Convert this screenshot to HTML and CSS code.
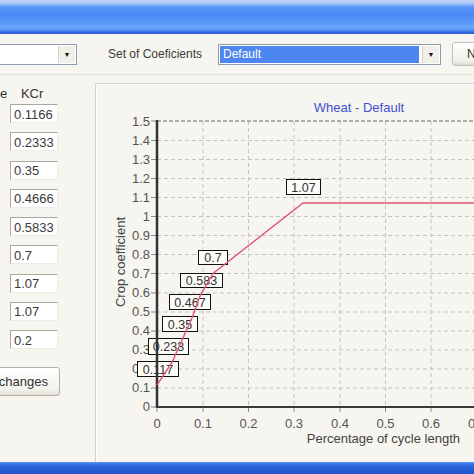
FILE: index.html
```html
<!DOCTYPE html>
<html lang="en">
<head>
  <meta charset="UTF-8" />
  <title>Crop coefficients</title>
  <link rel="stylesheet" href="styles.css">
</head>
<body>

  <!-- Window title bar -->
  <div class="titlebar"></div>

  <!-- Toolbar -->
  <div class="toolbar">
    <div class="combo combo-crop">
      <span class="combo-text"></span>
      <span class="combo-btn">&#9660;</span>
    </div>
    <label class="tool-label">Set of Coeficients</label>
    <div class="combo combo-set">
      <span class="combo-text selected">Default</span>
      <span class="combo-btn">&#9660;</span>
    </div>
    <button class="btn-new">New</button>
  </div>

  <div class="main">

    <!-- KC values -->
    <aside class="side">
      <div class="side-head">
        <span class="col-a">KCe</span>
        <span class="col-b">KCr</span>
      </div>
      <div class="kc-list">
        <input class="kc" type="text" value="0.1166" />
        <input class="kc" type="text" value="0.2333" />
        <input class="kc" type="text" value="0.35" />
        <input class="kc" type="text" value="0.4666" />
        <input class="kc" type="text" value="0.5833" />
        <input class="kc" type="text" value="0.7" />
        <input class="kc" type="text" value="1.07" />
        <input class="kc" type="text" value="1.07" />
        <input class="kc" type="text" value="0.2" />
      </div>
      <button class="btn-save">Save changes</button>
    </aside>

    <!-- Chart -->
    <section class="panel">
      <svg class="chart" width="378" height="378" viewBox="96 84 378 378">
        <text class="title" x="359" y="112" text-anchor="middle">Wheat - Default</text>

        <!-- grid -->
        <path class="grid" d="M157 388H474M157 369H474M157 350H474M157 331H474M157 312H474M157 293H474M157 273.5H474M157 254.5H474M157 235.5H474M157 216.5H474M157 197.5H474M157 178.5H474M157 159.5H474M157 140.5H474" />
        <path class="grid" d="M203 121V407M248.5 121V407M294 121V407M340 121V407M385.5 121V407M431 121V407" />
        <path class="grid-top" d="M157 121H474" />

        <!-- ticks -->
        <path class="tick" d="M151 121H157M151 140.5H157M151 159.5H157M151 178.5H157M151 197.5H157M151 216.5H157M151 235.5H157M151 254.5H157M151 273.5H157M151 293H157M151 312H157M151 331H157M151 350H157M151 369H157M151 388H157M151 407H157" />
        <path class="tick" d="M157 407V412M203 407V412M248.5 407V412M294 407V412M340 407V412M385.5 407V412M431 407V412" />

        <!-- y labels -->
        <g class="ylab" text-anchor="end">
          <text x="150" y="126">1.5</text>
          <text x="150" y="145">1.4</text>
          <text x="150" y="164">1.3</text>
          <text x="150" y="183">1.2</text>
          <text x="150" y="202">1.1</text>
          <text x="150" y="221">1</text>
          <text x="150" y="240">0.9</text>
          <text x="150" y="259">0.8</text>
          <text x="150" y="278">0.7</text>
          <text x="150" y="297">0.6</text>
          <text x="150" y="316">0.5</text>
          <text x="150" y="335">0.4</text>
          <text x="150" y="354">0.3</text>
          <text x="150" y="373">0.2</text>
          <text x="150" y="392">0.1</text>
          <text x="150" y="411">0</text>
        </g>

        <!-- x labels -->
        <g class="xlab" text-anchor="middle">
          <text x="157" y="428">0</text>
          <text x="203" y="428">0.1</text>
          <text x="248.5" y="428">0.2</text>
          <text x="294" y="428">0.3</text>
          <text x="340" y="428">0.4</text>
          <text x="385.5" y="428">0.5</text>
          <text x="431" y="428">0.6</text>
          <text x="477" y="428">0.7</text>
        </g>

        <text class="axis-title" x="460" y="443" text-anchor="end">Percentage of cycle length</text>
        <text class="axis-title" x="125" y="262" text-anchor="middle" transform="rotate(-90 125 262)">Crop coefficient</text>

        <!-- point labels -->
        <g class="plabel" text-anchor="middle">
          <rect x="286.5" y="179.5" width="34" height="15" /><text x="303.5" y="191.5">1.07</text>
          <rect x="198.5" y="250.5" width="29" height="14" /><text x="213" y="262">0.7</text>
          <rect x="180.5" y="273.5" width="42" height="14" /><text x="201.5" y="285">0.583</text>
          <rect x="169.5" y="294.5" width="41" height="15" /><text x="190" y="306.5">0.467</text>
          <rect x="162.5" y="316.5" width="35" height="15" /><text x="180" y="328.5">0.35</text>
          <rect x="148.5" y="338.5" width="40" height="16" /><text x="168.5" y="351">0.233</text>
          <rect x="137.5" y="361.5" width="41" height="15" /><text x="158" y="373.5">0.117</text>
        </g>

        <!-- axes -->
        <path class="axis" d="M157 120V408" />
        <path class="axis-x" d="M156 407H474" />

        <!-- data -->
        <polyline class="series" points="157,385 172,362.5 182,340 192,318 200,296 213,273.5 303,203 474,203" />
      </svg>
    </section>
  </div>

  <!-- Taskbar -->
  <div class="taskbar"></div>

</body>
</html>
```

FILE: styles.css
```css
html, body {
  margin: 0;
  padding: 0;
  width: 474px;
  height: 474px;
  overflow: hidden;
}

body {
  background: #f6f5ef;
  font-family: "Liberation Sans", Arial, sans-serif;
  font-size: 12px;
  color: #333;
}

.titlebar {
  height: 34px;
  background: linear-gradient(to bottom,
    #c8cff2 0, #b2ccf8 2px, #9cc0f8 4px, #5a97f8 7px, #4b8af6 14px,
    #5394f8 21px, #6aa7fb 27px, #5b97f4 30px, #3168dc 32px, #2a5cd2 34px);
}

/* Toolbar */
.toolbar {
  height: 40px;
  display: flex;
  align-items: center;
  border-bottom: 1px solid #e4e2d8;
  white-space: nowrap;
}

.toolbar > * {
  flex-shrink: 0;
}

.combo {
  height: 21px;
  box-sizing: border-box;
  display: flex;
  align-items: stretch;
  background: #fff;
  border: 1px solid #8d9cae;
}

.combo-text {
  flex: 1;
  padding-left: 3px;
  line-height: 19px;
}

.combo-text.selected {
  margin: 1px 2px 1px 1px;
  line-height: 17px;
  background: #4c86ee;
  color: #fff;
}

.combo-btn {
  width: 16px;
  margin: 1px;
  background: #f0efe9;
  border-left: 1px solid #d6d4ca;
  font-size: 7px;
  line-height: 17px;
  text-align: center;
  color: #111;
}

.combo-crop {
  width: 101px;
  margin-left: -24px;
}

.tool-label {
  margin-left: 31px;
  width: 101px;
  color: #3c3c3c;
}

.combo-set {
  width: 223px;
  margin-left: 9px;
}

.btn-new {
  margin-left: 11px;
  height: 24px;
  width: 60px;
  padding: 0 0 0 14px;
  text-align: left;
  font: 12px "Liberation Sans", Arial, sans-serif;
  color: #333;
  background: linear-gradient(to bottom, #ffffff, #f1f0ea 80%, #dedcd2);
  border: 1px solid #c2c0b6;
  border-radius: 3px;
}

/* Main area */
.main {
  display: flex;
  height: 387px;
}

.side {
  width: 95px;
  flex-shrink: 0;
  overflow: hidden;
  padding-left: 10px;
  box-sizing: border-box;
}

.side-head {
  padding-top: 12px;
  line-height: 14px;
  font-size: 13px;
  color: #333;
  white-space: nowrap;
}

.col-a {
  margin-left: -28px;
}

.col-b {
  margin-left: 10px;
}

.kc-list {
  margin-top: 3px;
  display: flex;
  flex-direction: column;
  gap: 9.25px;
}

.kc {
  width: 48px;
  height: 19px;
  box-sizing: border-box;
  margin: 0;
  padding: 1px 0 0 3px;
  font: 13px "Liberation Sans", Arial, sans-serif;
  color: #3a3a3a;
  background: #fff;
  border: 1px solid;
  border-color: #a9a79e #ecebe4 #ecebe4 #a9a79e;
  outline: none;
}

.btn-save {
  display: block;
  margin: 18px 0 0 -53px;
  width: 103px;
  height: 29px;
  padding: 0 11px 0 0;
  text-align: right;
  font: 13px "Liberation Sans", Arial, sans-serif;
  color: #333;
  background: linear-gradient(to bottom, #ffffff, #f3f2ec 80%, #e2e0d6);
  border: 1px solid #b4b2a8;
  border-radius: 3px;
}

.panel {
  flex: 1;
  margin-top: 8px;
  border-left: 1px solid #d4d2c8;
  border-top: 1px solid #d4d2c8;
  box-shadow: inset 1px 1px #ffffff;
  overflow: hidden;
}

.chart {
  display: block;
}

.chart text {
  font: 13px "Liberation Sans", Arial, sans-serif;
  fill: #555;
}

.chart .title {
  fill: #3e50cf;
}

.chart .axis-title {
  fill: #444;
}

.grid {
  fill: none;
  stroke: #c4c4bc;
  stroke-width: 1;
  stroke-dasharray: 4 3;
}

.grid-top {
  fill: none;
  stroke: #6a6a66;
  stroke-width: 1;
  stroke-dasharray: 4 2;
}

.tick {
  fill: none;
  stroke: #8a8a86;
  stroke-width: 1;
}

.plabel rect {
  fill: #fbfbf7;
  stroke: #111;
  stroke-width: 1;
}

.chart .plabel text {
  font-size: 12.5px;
  fill: #333;
}

.axis {
  fill: none;
  stroke: #333;
  stroke-width: 2.5;
}

.axis-x {
  fill: none;
  stroke: #3a3a3a;
  stroke-width: 2;
}

.series {
  fill: none;
  stroke: #e25576;
  stroke-width: 1.4;
}

.taskbar {
  height: 12px;
  background: linear-gradient(to bottom, #5c92f2 0, #3a78ea 2px, #2a60d6 5px, #2356cc 12px);
}
```
